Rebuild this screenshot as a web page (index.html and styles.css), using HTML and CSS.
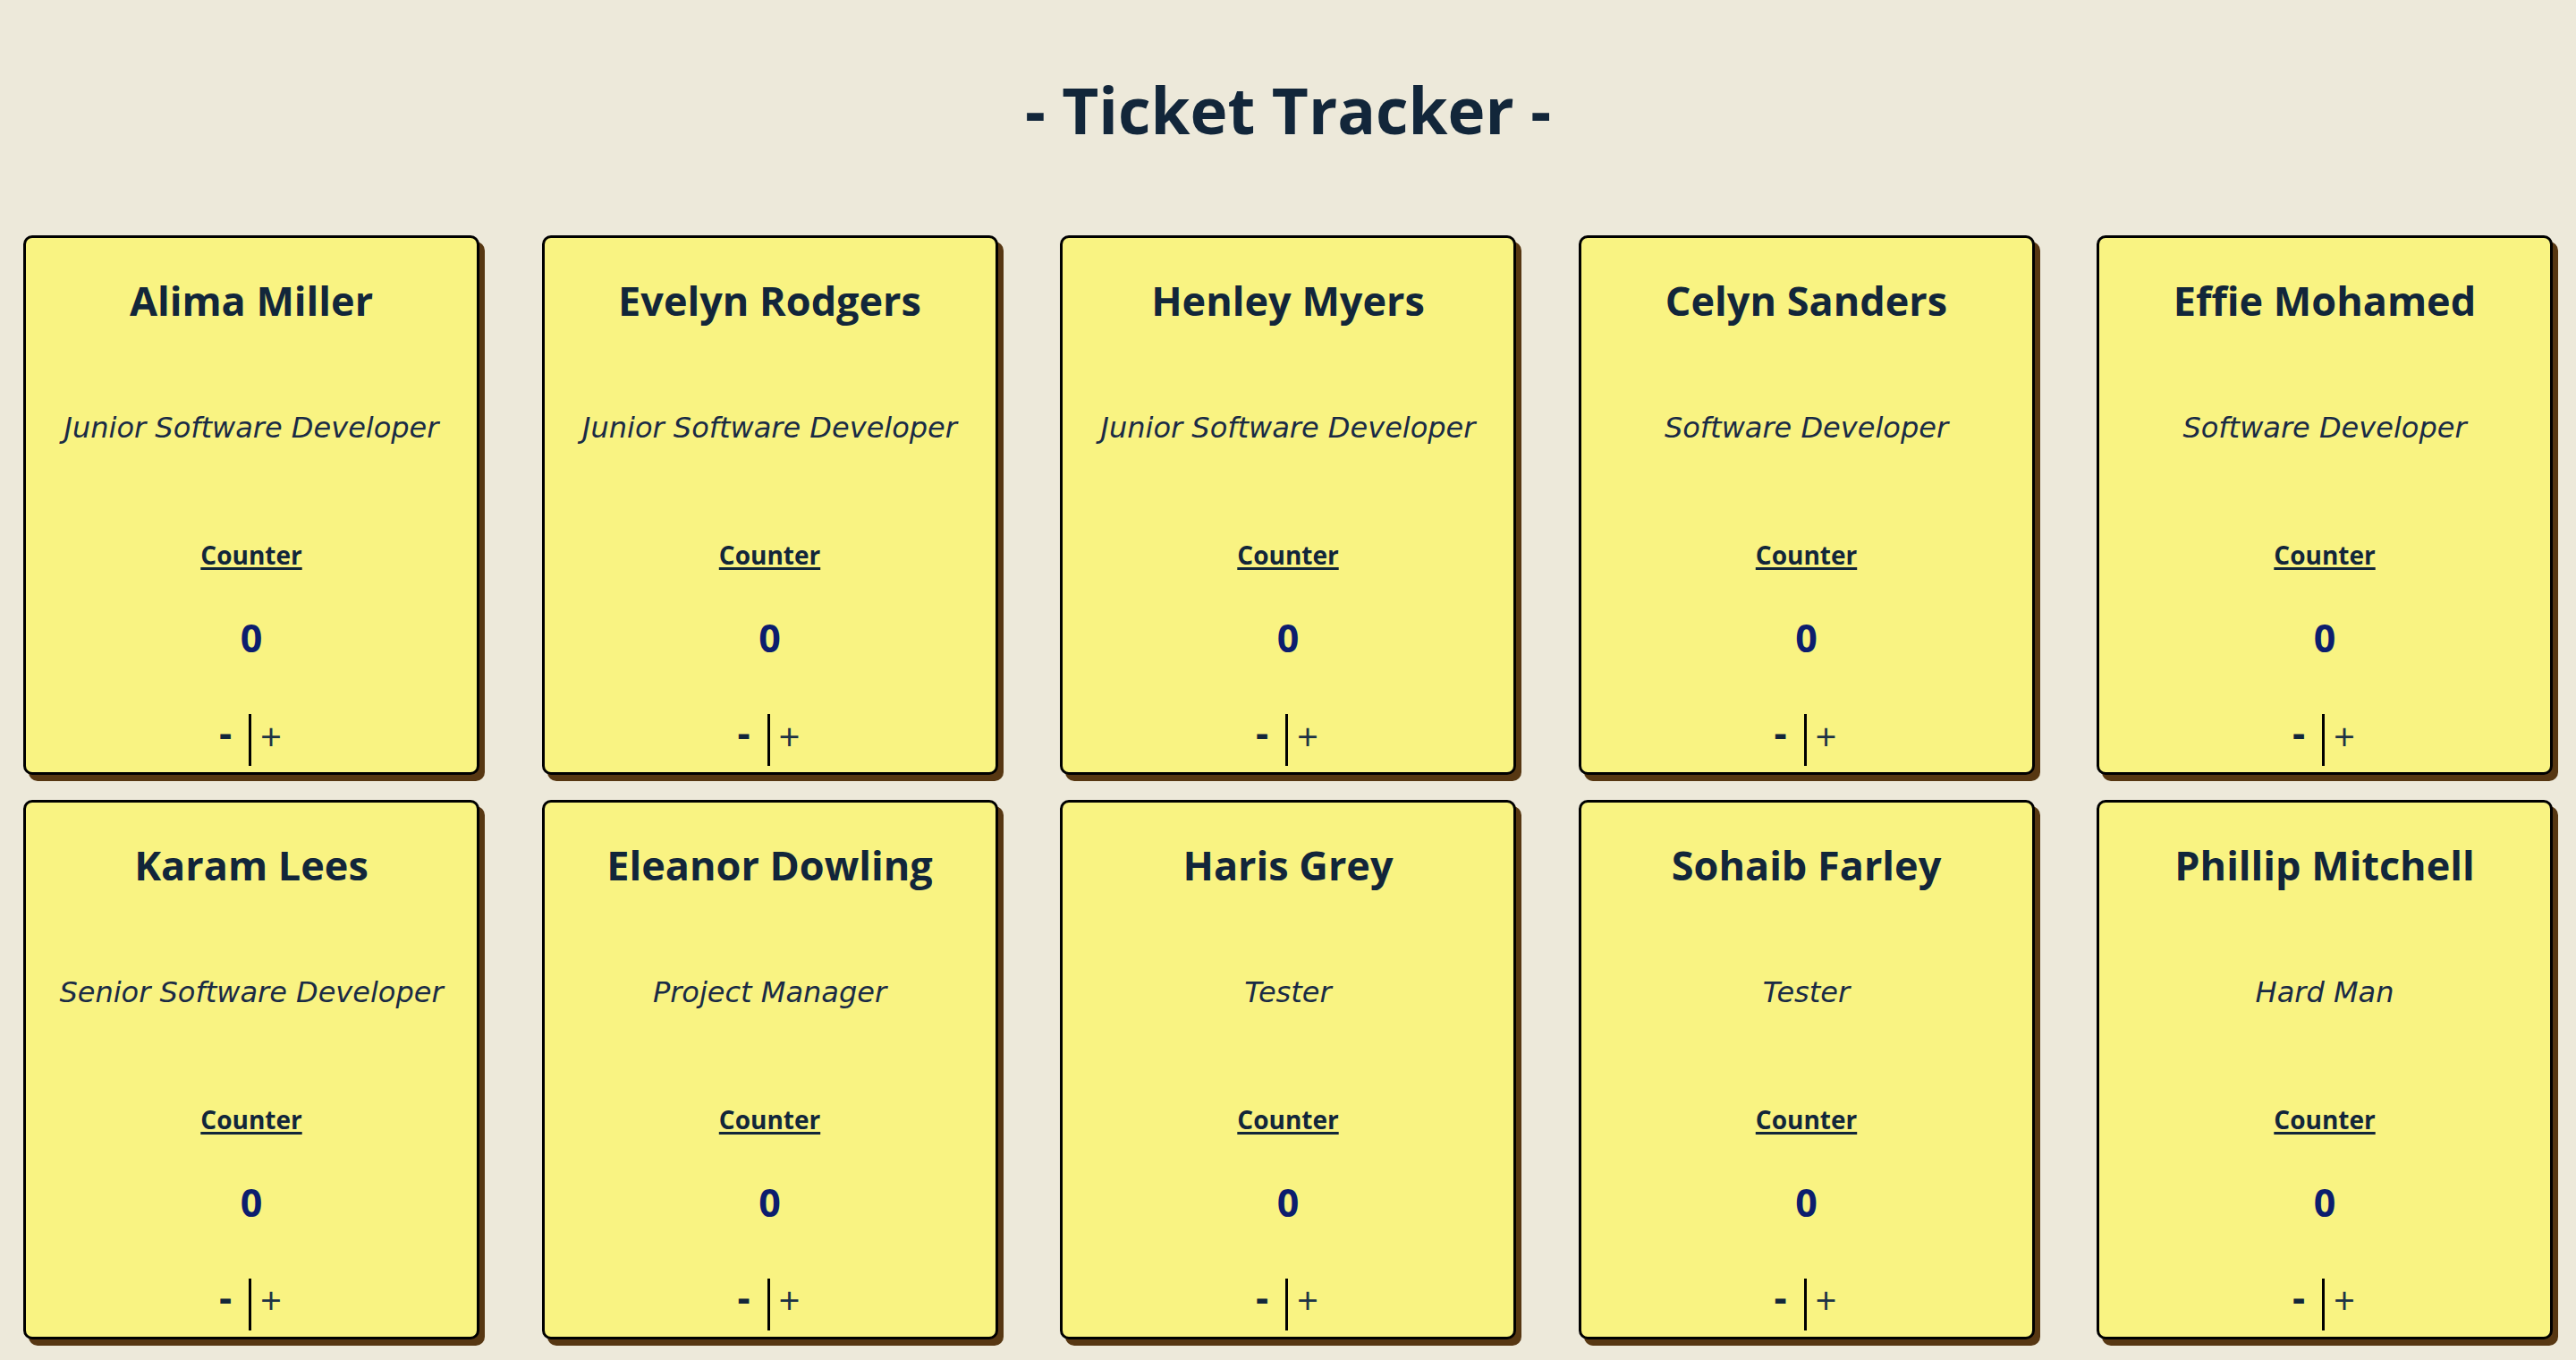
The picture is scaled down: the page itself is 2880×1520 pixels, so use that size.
FILE: index.html
```html
<!DOCTYPE html>
<html lang="en">
<head>
<meta charset="utf-8">
<title>Ticket Tracker</title>
<link rel="stylesheet" href="styles.css">
</head>
<body>
<h1 class="title">- Ticket Tracker -</h1>
<main class="board">
  <div class="card"><h2 class="name">Alima Miller</h2><p class="role">Junior Software Developer</p><h4 class="label">Counter</h4><p class="count">0</p><div class="controls"><button class="btn minus">-</button><button class="btn plus">+</button></div></div>
  <div class="card"><h2 class="name">Evelyn Rodgers</h2><p class="role">Junior Software Developer</p><h4 class="label">Counter</h4><p class="count">0</p><div class="controls"><button class="btn minus">-</button><button class="btn plus">+</button></div></div>
  <div class="card"><h2 class="name">Henley Myers</h2><p class="role">Junior Software Developer</p><h4 class="label">Counter</h4><p class="count">0</p><div class="controls"><button class="btn minus">-</button><button class="btn plus">+</button></div></div>
  <div class="card"><h2 class="name">Celyn Sanders</h2><p class="role">Software Developer</p><h4 class="label">Counter</h4><p class="count">0</p><div class="controls"><button class="btn minus">-</button><button class="btn plus">+</button></div></div>
  <div class="card"><h2 class="name">Effie Mohamed</h2><p class="role">Software Developer</p><h4 class="label">Counter</h4><p class="count">0</p><div class="controls"><button class="btn minus">-</button><button class="btn plus">+</button></div></div>
  <div class="card"><h2 class="name">Karam Lees</h2><p class="role">Senior Software Developer</p><h4 class="label">Counter</h4><p class="count">0</p><div class="controls"><button class="btn minus">-</button><button class="btn plus">+</button></div></div>
  <div class="card"><h2 class="name">Eleanor Dowling</h2><p class="role">Project Manager</p><h4 class="label">Counter</h4><p class="count">0</p><div class="controls"><button class="btn minus">-</button><button class="btn plus">+</button></div></div>
  <div class="card"><h2 class="name">Haris Grey</h2><p class="role">Tester</p><h4 class="label">Counter</h4><p class="count">0</p><div class="controls"><button class="btn minus">-</button><button class="btn plus">+</button></div></div>
  <div class="card"><h2 class="name">Sohaib Farley</h2><p class="role">Tester</p><h4 class="label">Counter</h4><p class="count">0</p><div class="controls"><button class="btn minus">-</button><button class="btn plus">+</button></div></div>
  <div class="card"><h2 class="name">Phillip Mitchell</h2><p class="role">Hard Man</p><h4 class="label">Counter</h4><p class="count">0</p><div class="controls"><button class="btn minus">-</button><button class="btn plus">+</button></div></div>
</main>
</body>
</html>
```
FILE: styles.css
```css
* { box-sizing: border-box; }

html, body {
  margin: 0;
  padding: 0;
}

body {
  background: #ede9da;
  color: #12263a;
  font-family: "Open Sans", "Noto Sans", sans-serif;
  min-height: 100vh;
}

.title {
  margin: 87px 0 0;
  font-size: 71px;
  line-height: 71px;
  font-weight: 700;
  text-align: center;
  color: #12263a;
}

.board {
  margin-top: 105px;
  padding: 0 26px;
  display: grid;
  grid-template-columns: repeat(5, 510px);
  column-gap: 69.5px;
  row-gap: 27.5px;
}

.card {
  height: 603px;
  background: #f9f382;
  border: 3px solid #000;
  border-radius: 10px;
  box-shadow: 6px 7px 0 #573712;
  padding-top: 47px;
  text-align: center;
}

.name {
  margin: 0;
  font-size: 45px;
  line-height: 45px;
  font-weight: 700;
  color: #12263a;
}

.role {
  margin: 104px 0 0;
  font-family: "DejaVu Sans", sans-serif;
  font-style: italic;
  font-weight: 400;
  font-size: 32px;
  line-height: 32px;
  color: #1a2b45;
}

.label {
  margin: 112px 0 0;
  font-size: 28px;
  line-height: 28px;
  font-weight: 700;
  color: #12263a;
  text-decoration: underline;
  text-decoration-thickness: 3px;
  text-underline-offset: 3px;
}

.count {
  margin: 57px 0 0;
  font-size: 43px;
  line-height: 43px;
  font-weight: 700;
  color: #0c1d6e;
}

.controls {
  margin-top: 64px;
  display: flex;
  justify-content: center;
}

.btn {
  height: 58px;
  margin: 0;
  border: 0;
  background: transparent;
  font-family: "Open Sans", sans-serif;
  display: flex;
  align-items: center;
  justify-content: center;
  line-height: 1;
  cursor: pointer;
}

.minus {
  width: 52px;
  font-size: 44px;
  font-weight: 700;
  color: #12263a;
  padding: 0 0 18px 0;
}

.plus {
  width: 58px;
  border-left: 3px solid #000;
  padding: 0 11px 9px 0;
  font-size: 42px;
  font-weight: 400;
  color: #1e3346;
}
```
